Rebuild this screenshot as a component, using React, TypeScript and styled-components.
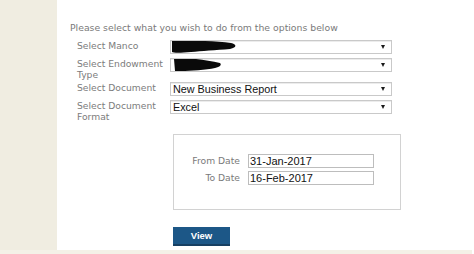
import React from "react";
import styled, { createGlobalStyle } from "styled-components";

const GlobalStyle = createGlobalStyle`
  html, body { margin: 0; padding: 0; background: #ffffff; }
  body { font-family: "DejaVu Sans", Verdana, sans-serif; }
`;

const Page = styled.div`
  width: 474px;
  height: 254px;
  display: flex;
  flex-direction: column;
  overflow: hidden;
`;

const Main = styled.div`
  display: flex;
  flex: 1;
`;

const Sidebar = styled.div`
  width: 57px;
  background: #f0ede1;
`;

const Content = styled.div`
  flex: 1;
  display: flex;
  flex-direction: column;
  align-items: flex-start;
  padding: 22px 0 0 13px;
  background: #ffffff;
`;

const Footer = styled.div`
  width: 472px;
  height: 4px;
  background: #f4f1e7;
`;

const Intro = styled.p`
  margin: 0 0 7px;
  font-size: 9.3px;
  line-height: 11px;
  color: #7a7a7a;
  white-space: nowrap;
`;

const FormGrid = styled.div`
  display: grid;
  grid-template-columns: 93px 222px;
  align-items: start;
  margin-left: 7px;
`;

const Label = styled.div`
  font-size: 9.2px;
  line-height: 11px;
  color: #7c7c7c;
  padding-bottom: 2px;
  padding-right: 4px;
`;

const SelectBox = styled.div`
  box-sizing: border-box;
  height: 14px;
  margin-bottom: 4px;
  display: flex;
  align-items: center;
  border: 1px solid #c9c9c9;
  box-shadow: inset 0 1px 0 #ececec;
  background: #ffffff;
  padding: 0 6px 0 2px;
  font-family: "Liberation Sans", Arial, sans-serif;
  font-size: 10.8px;
  line-height: 12px;
  color: #111111;
  overflow: hidden;
`;

const SelectValue = styled.span`
  flex: 1;
  display: flex;
  align-items: center;
  white-space: nowrap;
`;

const Arrow = styled.span`
  width: 0;
  height: 0;
  border-left: 2.5px solid transparent;
  border-right: 2.5px solid transparent;
  border-top: 4px solid #1a1a1a;
`;

const Redaction = styled.svg`
  display: block;
  margin-left: -2px;
  flex: none;
`;

const DateBox = styled.div`
  box-sizing: border-box;
  width: 228px;
  height: 76px;
  margin: 10px 0 0 103px;
  padding-top: 19px;
  border: 1px solid #d2d2d2;
`;

const DateGrid = styled.div`
  display: grid;
  grid-template-columns: 66px 126px;
  column-gap: 8px;
  row-gap: 3px;
`;

const DateLabel = styled.div`
  font-size: 9.2px;
  line-height: 14px;
  color: #7a7a7a;
  text-align: right;
`;

const DateInput = styled.div`
  box-sizing: border-box;
  height: 14px;
  border: 1px solid #bdbdbd;
  padding-left: 1px;
  font-family: "Liberation Sans", Arial, sans-serif;
  font-size: 11px;
  line-height: 12px;
  color: #111111;
`;

const ViewButton = styled.button`
  box-sizing: border-box;
  width: 57px;
  height: 19px;
  margin: 17px 0 0 103px;
  padding: 0;
  border: none;
  border-bottom: 2px solid #163f62;
  background: #1c5787;
  color: #ffffff;
  font-family: "Liberation Sans", Arial, sans-serif;
  font-weight: bold;
  font-size: 9.5px;
  line-height: 17px;
  cursor: pointer;
`;

const Blob1 = () => (
  <Redaction width="66" height="14" viewBox="0 0 66 14">
    <path
      d="M1,1 C18,0 44,1 60,3 C66,4 66,8 59,9 C45,10 30,11 20,12 C10,13 2,13 1,12 Z"
      fill="#0a0a0a"
    />
  </Redaction>
);

const Blob2 = () => (
  <Redaction width="52" height="14" viewBox="0 0 52 14">
    <path
      d="M3,1 L9,0 C20,0 36,2 49,5 C51,7 49,9 44,10 C35,12 20,13 10,13 L4,13 Z"
      fill="#0a0a0a"
    />
  </Redaction>
);

type SelectProps = { children: React.ReactNode };
const Select = ({ children }: SelectProps) => (
  <SelectBox>
    <SelectValue>{children}</SelectValue>
    <Arrow />
  </SelectBox>
);

export default function App() {
  return (
    <>
      <GlobalStyle />
      <Page>
        <Main>
          <Sidebar />
          <Content>
            <Intro>Please select what you wish to do from the options below</Intro>
            <FormGrid>
              <Label>Select Manco</Label>
              <Select>
                <Blob1 />
              </Select>
              <Label>Select Endowment Type</Label>
              <Select>
                <Blob2 />
              </Select>
              <Label>Select Document</Label>
              <Select>New Business Report</Select>
              <Label>Select Document Format</Label>
              <Select>Excel</Select>
            </FormGrid>
            <DateBox>
              <DateGrid>
                <DateLabel>From Date</DateLabel>
                <DateInput>31-Jan-2017</DateInput>
                <DateLabel>To Date</DateLabel>
                <DateInput>16-Feb-2017</DateInput>
              </DateGrid>
            </DateBox>
            <ViewButton>View</ViewButton>
          </Content>
        </Main>
        <Footer />
      </Page>
    </>
  );
}
